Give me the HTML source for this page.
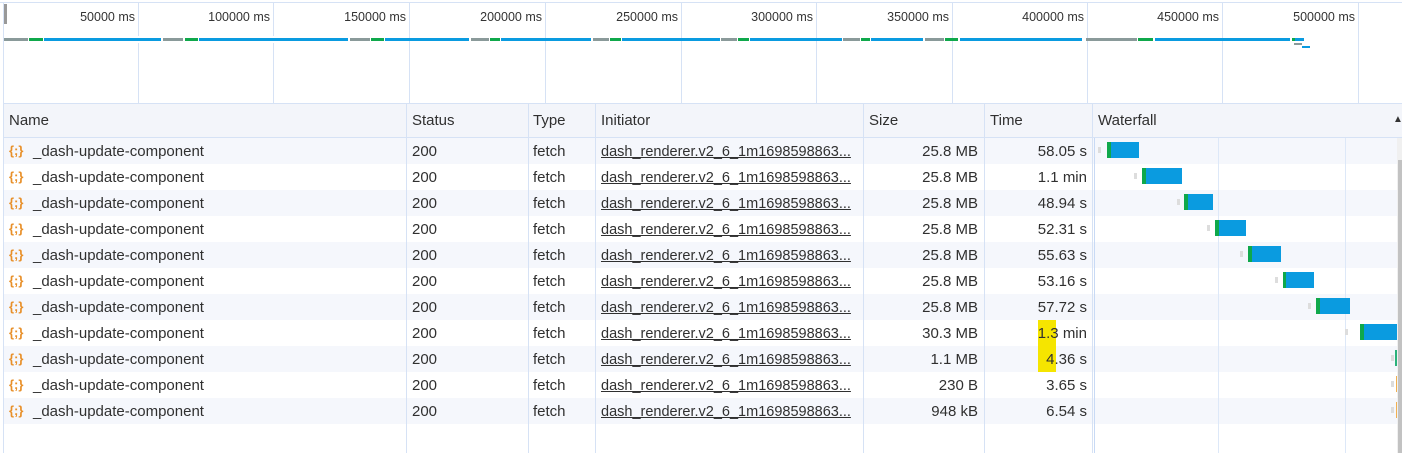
<!DOCTYPE html><html><head><style>
*{margin:0;padding:0;box-sizing:border-box}
body{width:1402px;height:453px;background:#fff;position:relative;overflow:hidden;font-family:"Liberation Sans",sans-serif;font-size:14.5px;color:#303030}
.a{position:absolute}
.vl{position:absolute;width:1px;background:#d6e2f5}
.lab{position:absolute;top:10px;font-size:12.5px;color:#333;text-align:right;width:120px}
.seg{position:absolute;height:3px;top:38px}
.g{background:#8a9a9a}.gr{background:#0fa84b}.b{background:#0a9be0}
.row{position:absolute;left:4px;width:1393px;height:26px}
.row.s{background:#f5f7fc}
.c{position:absolute;top:6px;white-space:nowrap}
.n{font-size:15px;top:5px}
.ic{position:absolute;left:9px;top:5px;color:#e8902a;font-size:13px;font-weight:bold}
.wb{position:absolute;top:4px;height:16px}
.tk{position:absolute;top:9px;width:3px;height:6px;background:#ddd}
</style></head><body>
<div class="a" style="left:0;top:2px;width:1402px;height:1px;background:#d6e2f5"></div>
<div class="a" style="left:3px;top:3px;width:1px;height:100px;background:#d6e2f5"></div>
<div class="a" style="left:4px;top:4px;width:3px;height:20px;background:#999"></div>
<div class="vl" style="left:138px;top:3px;height:33px"></div><div class="vl" style="left:138px;top:43px;height:60px"></div>
<div class="vl" style="left:273px;top:3px;height:33px"></div><div class="vl" style="left:273px;top:43px;height:60px"></div>
<div class="vl" style="left:409px;top:3px;height:100px"></div>
<div class="vl" style="left:545px;top:3px;height:100px"></div>
<div class="vl" style="left:681px;top:3px;height:100px"></div>
<div class="vl" style="left:816px;top:3px;height:100px"></div>
<div class="vl" style="left:952px;top:3px;height:100px"></div>
<div class="vl" style="left:1087px;top:3px;height:100px"></div>
<div class="vl" style="left:1222px;top:3px;height:100px"></div>
<div class="vl" style="left:1358px;top:3px;height:100px"></div>
<div class="lab" style="left:15px">50000 ms</div>
<div class="lab" style="left:150px">100000 ms</div>
<div class="lab" style="left:286px">150000 ms</div>
<div class="lab" style="left:422px">200000 ms</div>
<div class="lab" style="left:558px">250000 ms</div>
<div class="lab" style="left:693px">300000 ms</div>
<div class="lab" style="left:829px">350000 ms</div>
<div class="lab" style="left:964px">400000 ms</div>
<div class="lab" style="left:1099px">450000 ms</div>
<div class="lab" style="left:1235px">500000 ms</div>
<div class="seg g" style="left:4px;width:24px"></div><div class="seg gr" style="left:29px;width:14px"></div><div class="seg b" style="left:44px;width:117px"></div>
<div class="seg g" style="left:163px;width:20px"></div><div class="seg gr" style="left:185px;width:13px"></div><div class="seg b" style="left:199px;width:149px"></div>
<div class="seg g" style="left:350px;width:20px"></div><div class="seg gr" style="left:371px;width:13px"></div><div class="seg b" style="left:385px;width:84px"></div>
<div class="seg g" style="left:471px;width:18px"></div><div class="seg gr" style="left:490px;width:10px"></div><div class="seg b" style="left:501px;width:90px"></div>
<div class="seg g" style="left:593px;width:16px"></div><div class="seg gr" style="left:610px;width:11px"></div><div class="seg b" style="left:622px;width:98px"></div>
<div class="seg g" style="left:721px;width:16px"></div><div class="seg gr" style="left:738px;width:11px"></div><div class="seg b" style="left:750px;width:92px"></div>
<div class="seg g" style="left:843px;width:17px"></div><div class="seg gr" style="left:861px;width:9px"></div><div class="seg b" style="left:871px;width:52px"></div>
<div class="seg g" style="left:925px;width:19px"></div><div class="seg gr" style="left:945px;width:13px"></div><div class="seg b" style="left:960px;width:122px"></div>
<div class="seg g" style="left:1086px;width:51px"></div><div class="seg gr" style="left:1138px;width:15px"></div><div class="seg b" style="left:1155px;width:135px"></div>
<div class="seg gr" style="left:1292px;width:3px"></div><div class="seg b" style="left:1295px;width:9px"></div>
<div class="a g" style="left:1294px;top:43px;width:8px;height:2px"></div>
<div class="a b" style="left:1302px;top:46px;width:8px;height:2px"></div>
<div class="a" style="left:3px;top:103px;width:1399px;height:35px;background:#f3f5fa;border-top:1px solid #d6e2f5;border-bottom:1px solid #d6e2f5"></div>
<div class="a" style="left:9px;top:112px;font-size:15px">Name</div>
<div class="a" style="left:412px;top:112px;font-size:15px">Status</div>
<div class="a" style="left:533px;top:112px;font-size:15px">Type</div>
<div class="a" style="left:601px;top:112px;font-size:15px">Initiator</div>
<div class="a" style="left:869px;top:112px;font-size:15px">Size</div>
<div class="a" style="left:990px;top:112px;font-size:15px">Time</div>
<div class="a" style="left:1098px;top:112px;font-size:15px">Waterfall</div>
<div class="a" style="left:1393px;top:114px;font-size:10px;color:#333">▲</div>
<div class="row s" style="top:138px"></div>
<div class="row" style="top:164px"></div>
<div class="row s" style="top:190px"></div>
<div class="row" style="top:216px"></div>
<div class="row s" style="top:242px"></div>
<div class="row" style="top:268px"></div>
<div class="row s" style="top:294px"></div>
<div class="row" style="top:320px"></div>
<div class="row s" style="top:346px"></div>
<div class="row" style="top:372px"></div>
<div class="row s" style="top:398px"></div>
<div class="a" style="left:1038px;top:320px;width:18px;height:52px;background:#f5e500"></div>
<div class="vl" style="left:3px;top:104px;height:349px"></div>
<div class="vl" style="left:406px;top:104px;height:349px"></div>
<div class="vl" style="left:528px;top:104px;height:349px"></div>
<div class="vl" style="left:595px;top:104px;height:349px"></div>
<div class="vl" style="left:863px;top:104px;height:349px"></div>
<div class="vl" style="left:984px;top:104px;height:349px"></div>
<div class="vl" style="left:1092px;top:104px;height:349px"></div>
<div class="vl" style="left:1094px;top:138px;height:315px;background:#c8daf5"></div>
<div class="vl" style="left:1218px;top:138px;height:315px;background:#dde8f8"></div>
<div class="vl" style="left:1345px;top:138px;height:315px;background:#dde8f8"></div>
<div class="a" style="left:1397px;top:138px;width:5px;height:315px;background:#f0f0f0"></div>
<div class="a" style="left:1398px;top:160px;width:4px;height:293px;background:#c2c2c2"></div>
<div class="a" style="left:0;top:138px;width:1402px">
<div style="position:relative;height:26px"><span class="ic">{;}</span><span class="c n" style="left:33px">_dash-update-component</span><span class="c n" style="left:412px">200</span><span class="c n" style="left:533px">fetch</span><span class="c" style="left:601px;text-decoration:underline">dash_renderer.v2_6_1m1698598863...</span><span class="c n" style="right:424px">25.8 MB</span><span class="c n" style="right:315px">58.05 s</span><span class="tk" style="left:1098px"></span><span class="wb gr" style="left:1107px;width:4px"></span><span class="wb b" style="left:1111px;width:28px"></span></div>
<div style="position:relative;height:26px"><span class="ic">{;}</span><span class="c n" style="left:33px">_dash-update-component</span><span class="c n" style="left:412px">200</span><span class="c n" style="left:533px">fetch</span><span class="c" style="left:601px;text-decoration:underline">dash_renderer.v2_6_1m1698598863...</span><span class="c n" style="right:424px">25.8 MB</span><span class="c n" style="right:315px">1.1 min</span><span class="tk" style="left:1134px"></span><span class="wb gr" style="left:1142px;width:4px"></span><span class="wb b" style="left:1146px;width:36px"></span></div>
<div style="position:relative;height:26px"><span class="ic">{;}</span><span class="c n" style="left:33px">_dash-update-component</span><span class="c n" style="left:412px">200</span><span class="c n" style="left:533px">fetch</span><span class="c" style="left:601px;text-decoration:underline">dash_renderer.v2_6_1m1698598863...</span><span class="c n" style="right:424px">25.8 MB</span><span class="c n" style="right:315px">48.94 s</span><span class="tk" style="left:1177px"></span><span class="wb gr" style="left:1184px;width:4px"></span><span class="wb b" style="left:1188px;width:25px"></span></div>
<div style="position:relative;height:26px"><span class="ic">{;}</span><span class="c n" style="left:33px">_dash-update-component</span><span class="c n" style="left:412px">200</span><span class="c n" style="left:533px">fetch</span><span class="c" style="left:601px;text-decoration:underline">dash_renderer.v2_6_1m1698598863...</span><span class="c n" style="right:424px">25.8 MB</span><span class="c n" style="right:315px">52.31 s</span><span class="tk" style="left:1207px"></span><span class="wb gr" style="left:1215px;width:4px"></span><span class="wb b" style="left:1219px;width:27px"></span></div>
<div style="position:relative;height:26px"><span class="ic">{;}</span><span class="c n" style="left:33px">_dash-update-component</span><span class="c n" style="left:412px">200</span><span class="c n" style="left:533px">fetch</span><span class="c" style="left:601px;text-decoration:underline">dash_renderer.v2_6_1m1698598863...</span><span class="c n" style="right:424px">25.8 MB</span><span class="c n" style="right:315px">55.63 s</span><span class="tk" style="left:1240px"></span><span class="wb gr" style="left:1248px;width:4px"></span><span class="wb b" style="left:1252px;width:29px"></span></div>
<div style="position:relative;height:26px"><span class="ic">{;}</span><span class="c n" style="left:33px">_dash-update-component</span><span class="c n" style="left:412px">200</span><span class="c n" style="left:533px">fetch</span><span class="c" style="left:601px;text-decoration:underline">dash_renderer.v2_6_1m1698598863...</span><span class="c n" style="right:424px">25.8 MB</span><span class="c n" style="right:315px">53.16 s</span><span class="tk" style="left:1275px"></span><span class="wb gr" style="left:1283px;width:3px"></span><span class="wb b" style="left:1286px;width:28px"></span></div>
<div style="position:relative;height:26px"><span class="ic">{;}</span><span class="c n" style="left:33px">_dash-update-component</span><span class="c n" style="left:412px">200</span><span class="c n" style="left:533px">fetch</span><span class="c" style="left:601px;text-decoration:underline">dash_renderer.v2_6_1m1698598863...</span><span class="c n" style="right:424px">25.8 MB</span><span class="c n" style="right:315px">57.72 s</span><span class="tk" style="left:1308px"></span><span class="wb gr" style="left:1316px;width:4px"></span><span class="wb b" style="left:1320px;width:30px"></span></div>
<div style="position:relative;height:26px"><span class="ic">{;}</span><span class="c n" style="left:33px">_dash-update-component</span><span class="c n" style="left:412px">200</span><span class="c n" style="left:533px">fetch</span><span class="c" style="left:601px;text-decoration:underline">dash_renderer.v2_6_1m1698598863...</span><span class="c n" style="right:424px">30.3 MB</span><span class="c n" style="right:315px">1.3 min</span><span class="tk" style="left:1345px"></span><span class="wb gr" style="left:1360px;width:4px"></span><span class="wb b" style="left:1364px;width:33px"></span></div>
<div style="position:relative;height:26px"><span class="ic">{;}</span><span class="c n" style="left:33px">_dash-update-component</span><span class="c n" style="left:412px">200</span><span class="c n" style="left:533px">fetch</span><span class="c" style="left:601px;text-decoration:underline">dash_renderer.v2_6_1m1698598863...</span><span class="c n" style="right:424px">1.1 MB</span><span class="c n" style="right:315px">4.36 s</span><span class="tk" style="left:1391px"></span><span class="wb" style="left:1395px;width:2px;background:#2ab27b"></span></div>
<div style="position:relative;height:26px"><span class="ic">{;}</span><span class="c n" style="left:33px">_dash-update-component</span><span class="c n" style="left:412px">200</span><span class="c n" style="left:533px">fetch</span><span class="c" style="left:601px;text-decoration:underline">dash_renderer.v2_6_1m1698598863...</span><span class="c n" style="right:424px">230 B</span><span class="c n" style="right:315px">3.65 s</span><span class="tk" style="left:1391px"></span><span class="wb" style="left:1396px;width:1px;background:#f0b050"></span></div>
<div style="position:relative;height:26px"><span class="ic">{;}</span><span class="c n" style="left:33px">_dash-update-component</span><span class="c n" style="left:412px">200</span><span class="c n" style="left:533px">fetch</span><span class="c" style="left:601px;text-decoration:underline">dash_renderer.v2_6_1m1698598863...</span><span class="c n" style="right:424px">948 kB</span><span class="c n" style="right:315px">6.54 s</span><span class="tk" style="left:1391px"></span><span class="wb" style="left:1396px;width:1px;background:#f0b050"></span></div>
</div>
</body></html>
